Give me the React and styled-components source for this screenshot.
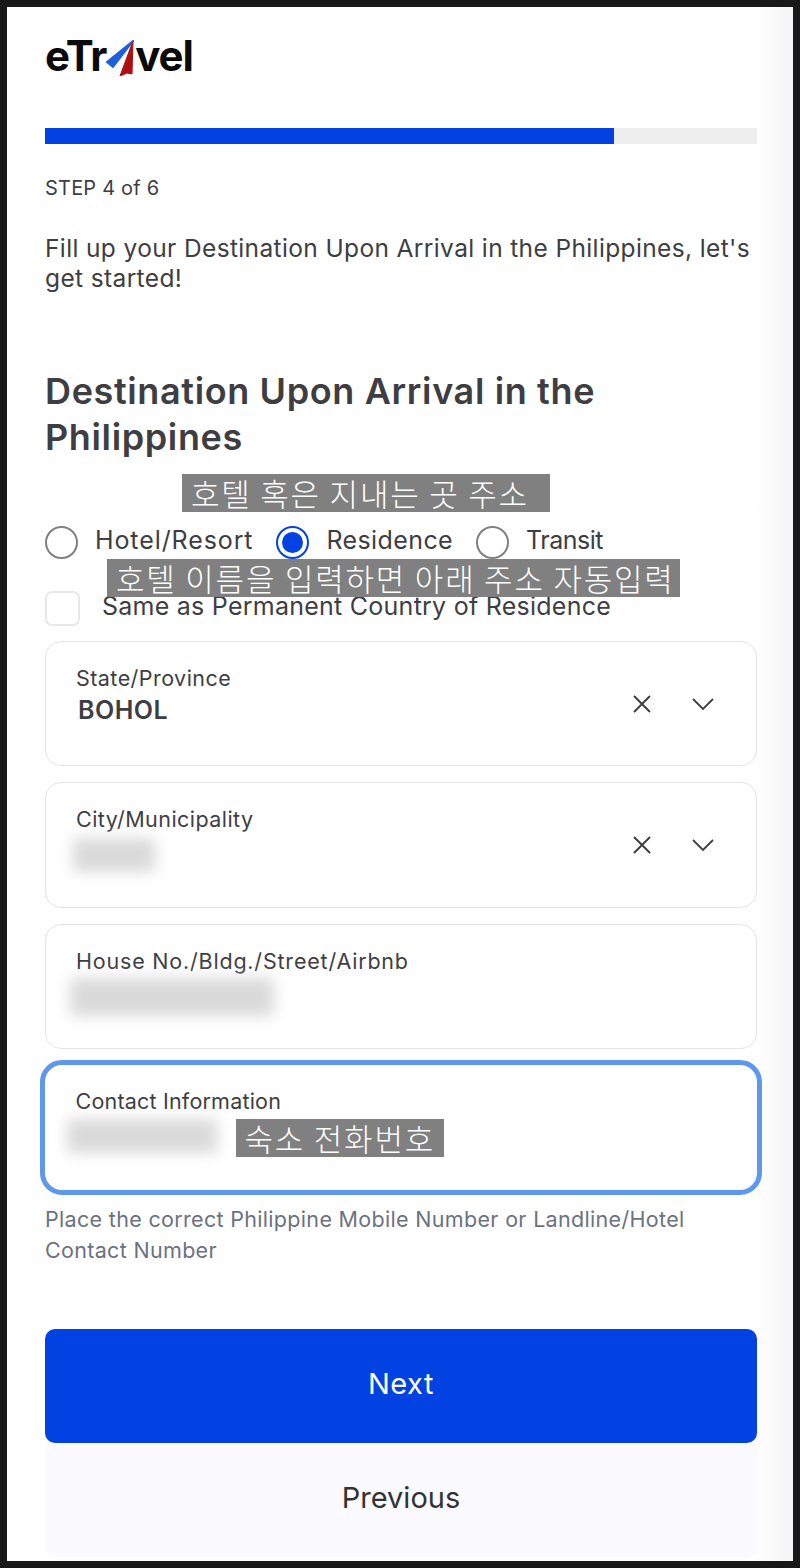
import React from "react";
import styled, { createGlobalStyle } from "styled-components";

const Global = createGlobalStyle`
  html, body { margin: 0; padding: 0; background: #181818; }
  * { box-sizing: border-box; }
`;

const Frame = styled.div`
  position: relative;
  width: 800px;
  height: 1568px;
  border: 7px solid #181818;
  overflow: hidden;
  background: linear-gradient(90deg, #ffffff 0, #ffffff 745px, #f5f5f7 786px);
  font-family: Inter, "Noto Sans CJK KR", sans-serif;
  color: #3e3e42;
`;
const Content = styled.div`
  display: flex;
  flex-direction: column;
  padding: 30px 36px 0 38px;
`;
const Logo = styled.div`
  display: flex;
  align-items: center;
  height: 38px;
  font-family: Inter, sans-serif;
  font-size: 42px;
  font-weight: 700;
  letter-spacing: -1.1px;
  line-height: 36px;
  color: #0a0a0a;
`;
const Track = styled.div`
  height: 16px;
  margin-top: 53px;
  background: #eeeeee;
`;
const Fill = styled.div`
  height: 100%;
  background: #0241e2;
`;
const Step = styled.div`
  margin-top: 30px;
  font-size: 20px;
  line-height: 28px;
  letter-spacing: 0.2px;
`;
const Intro = styled.p`
  margin: 31px 0 0;
  font-size: 24.5px;
  line-height: 30px;
  letter-spacing: 0.37px;
`;
const Heading = styled.h2`
  margin: 75px 0 0;
  max-width: 620px;
  font-size: 36px;
  line-height: 46px;
  font-weight: 600;
  letter-spacing: 0.63px;
`;
const RadioRow = styled.div`
  display: flex;
  align-items: center;
  margin-top: 65px;
  height: 34px;
`;
const RadioItem = styled.label`
  display: flex;
  align-items: center;
  gap: 17px;
  margin-right: 23px;
  font-size: 25px;
`;
const RadioText = styled.span`
  margin-bottom: 4px;
  letter-spacing: ${(p) => p.$ls}px;
`;
const Radio = styled.span`
  flex: none;
  width: 33px;
  height: 33px;
  border-radius: 50%;
  border: 2px solid ${(p) => (p.$on ? "#0241e2" : "#808080")};
  display: flex;
  align-items: center;
  justify-content: center;
`;
const Dot = styled.span`
  width: 21px;
  height: 21px;
  border-radius: 50%;
  background: #0241e2;
`;
const CheckRow = styled.div`
  display: flex;
  align-items: center;
  gap: 22px;
  margin-top: 32px;
  font-size: 25px;
  letter-spacing: 0.25px;
`;
const CheckText = styled.span`
  margin-bottom: 5px;
`;
const Check = styled.span`
  flex: none;
  width: 35px;
  height: 35px;
  border: 2px solid #e8e8ea;
  border-radius: 7px;
  background: #fff;
`;
const Fields = styled.div`
  display: flex;
  flex-direction: column;
  gap: 16px;
  margin-top: 15px;
`;
const Field = styled.div`
  position: relative;
  display: flex;
  align-items: flex-start;
  justify-content: space-between;
  height: 125.3px;
  padding: 22px 41px 0 30px;
  background: #fff;
  border: 1.5px solid #e4e4e7;
  border-radius: 16px;
`;
const FocusField = styled(Field)`
  margin: -5px -5px 0;
  height: 135px;
  padding: 22.5px 41px 0 30.5px;
  border: 5.5px solid #5f97ef;
  border-radius: 22px;
`;
const FieldBody = styled.div`
  display: flex;
  flex-direction: column;
`;
const Label = styled.div`
  font-size: 21.5px;
  line-height: 28px;
  letter-spacing: ${(p) => p.$ls || 0.45}px;
`;
const Value = styled.div`
  margin-top: 2px;
  margin-left: 2px;
  font-size: 25px;
  line-height: 32px;
  font-weight: 600;
  letter-spacing: 0.5px;
`;
const Blur = styled.div`
  margin: ${(p) => p.$top}px 0 0 ${(p) => p.$left}px;
  width: ${(p) => p.$w}px;
  height: ${(p) => p.$h}px;
  background: #dadada;
  filter: blur(7px);
`;
const BlurRow = styled.div`
  display: flex;
  align-items: flex-start;
  margin-top: 4px;
`;
const Icons = styled.div`
  display: flex;
  align-items: center;
  gap: 39px;
  margin-top: 30px;
  color: #3e3e42;
`;
const Help = styled.p`
  margin: 9px 0 0;
  font-size: 21.5px;
  line-height: 31px;
  letter-spacing: 0.32px;
  color: #6b7280;
`;
const NextButton = styled.button`
  margin-top: 63px;
  height: 114px;
  padding: 0 0 5px;
  border: 0;
  border-radius: 10px;
  background: #0241e2;
  color: #fff;
  font: inherit;
  font-size: 29px;
  letter-spacing: 0.5px;
`;
const PrevButton = styled.button`
  height: 114px;
  padding: 0 0 5px;
  border: 0;
  border-radius: 0 0 10px 10px;
  background: #fafaff;
  color: #333;
  font: inherit;
  font-size: 29px;
`;
const Note = styled.div`
  position: absolute;
  left: ${(p) => p.$x}px;
  top: ${(p) => p.$y}px;
  width: ${(p) => p.$w}px;
  height: 37.5px;
  padding-left: ${(p) => p.$pad}px;
  background: #808080;
  color: #fff;
  font-family: "Noto Sans CJK KR", sans-serif;
  font-size: 31px;
  letter-spacing: 1.8px;
  line-height: 37px;
  white-space: nowrap;
  font-weight: 300;
`;
const InlineNote = styled(Note)`
  position: static;
  flex: none;
  margin-left: 19px;
`;

const Mark = () => (
  <svg width="32" height="36" viewBox="0 0 32 36" style={{ margin: "4px -2px 0 -1px" }}>
    <path d="M2 22 L28 1 L8 27 Z" fill="#1f5fdc" stroke="#1f5fdc" strokeWidth="2" strokeLinejoin="round" />
    <path d="M28 1 L15 36 L22 33 L27 34 Z" fill="#ad1010" stroke="#ad1010" strokeWidth="1" strokeLinejoin="round" />
  </svg>
);
const Close = () => (
  <svg width="20" height="20" viewBox="0 0 20 20" fill="none" stroke="currentColor" strokeWidth="2">
    <path d="M2 2 L18 18 M18 2 L2 18" />
  </svg>
);
const Chevron = () => (
  <svg width="24" height="16" viewBox="0 0 24 16" fill="none" stroke="currentColor" strokeWidth="1.8">
    <path d="M2 3 L12 13 L22 3" />
  </svg>
);
const Controls = () => (
  <Icons>
    <Close />
    <Chevron />
  </Icons>
);

export default function App() {
  return (
    <>
      <Global />
      <Frame>
        <Content>
          <Logo>
            eTr
            <Mark />
            vel
          </Logo>
          <Track>
            <Fill style={{ width: "79.85%" }} />
          </Track>
          <Step>STEP 4 of 6</Step>
          <Intro>Fill up your Destination Upon Arrival in the Philippines, let's get started!</Intro>
          <Heading>Destination Upon Arrival in the Philippines</Heading>
          <RadioRow>
            <RadioItem><Radio /><RadioText $ls={0.9}>Hotel/Resort</RadioText></RadioItem>
            <RadioItem><Radio $on><Dot /></Radio><RadioText $ls={0.4}>Residence</RadioText></RadioItem>
            <RadioItem><Radio /><RadioText $ls={-0.5}>Transit</RadioText></RadioItem>
          </RadioRow>
          <CheckRow><Check /><CheckText>Same as Permanent Country of Residence</CheckText></CheckRow>
          <Fields>
            <Field>
              <FieldBody><Label>State/Province</Label><Value>BOHOL</Value></FieldBody>
              <Controls />
            </Field>
            <Field>
              <FieldBody><Label>City/Municipality</Label><Blur $top={5} $left={-3} $w={82} $h={34} /></FieldBody>
              <Controls />
            </Field>
            <Field>
              <FieldBody><Label $ls={0.8}>House No./Bldg./Street/Airbnb</Label><Blur $top={3} $left={-6} $w={204} $h={38} /></FieldBody>
            </Field>
            <FocusField>
              <FieldBody>
                <Label $ls={0.2}>Contact Information</Label>
                <BlurRow>
                  <Blur $top={0} $left={-9} $w={150} $h={34} />
                  <InlineNote $w={208} $pad={9}>숙소 전화번호</InlineNote>
                </BlurRow>
              </FieldBody>
            </FocusField>
          </Fields>
          <Help>Place the correct Philippine Mobile Number or Landline/Hotel Contact Number</Help>
          <NextButton>Next</NextButton>
          <PrevButton>Previous</PrevButton>
        </Content>
        <Note $x={175} $y={467} $w={368} $pad={9}>호텔 혹은 지내는 곳 주소</Note>
        <Note $x={100} $y={552} $w={573} $pad={9}>호텔 이름을 입력하면 아래 주소 자동입력</Note>
      </Frame>
    </>
  );
}
